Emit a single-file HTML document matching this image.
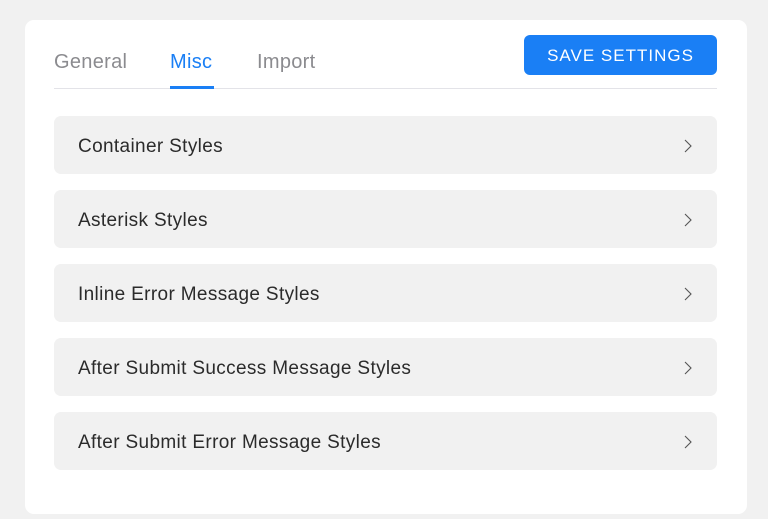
<!DOCTYPE html>
<html><head><style>
body{margin:0;background:#f1f1f1;width:768px;height:519px;font-family:"Liberation Sans",sans-serif;position:relative;overflow:hidden}
.card{position:absolute;left:25px;top:20px;width:722px;height:494px;background:#fff;border-radius:9px}
.tab{position:absolute;top:51px;font-size:20px;color:#8b8b8f;letter-spacing:0.3px}
.btn{position:absolute;left:524px;top:35px;width:193px;height:40px;background:#1a7ff5;border-radius:6px;color:#fff;font-size:17px;letter-spacing:1px;text-align:center;line-height:41px}
.line{position:absolute;left:54px;top:88px;width:663px;height:1px;background:#e3e3e8}
.ul{position:absolute;left:170px;top:86px;width:44px;height:3px;background:#1a7ff5}
.row{position:absolute;left:54px;width:663px;height:58px;background:#f1f1f1;border-radius:7px}
.row span{position:absolute;left:24px;top:20px;font-size:19px;letter-spacing:0.35px;color:#2b2b2b}
.row svg{position:absolute;left:628px;top:22px}
</style></head><body>
<div class="card"></div>
<div class="tab" style="left:54px">General</div>
<div class="tab" style="left:170px;color:#1a7ff5">Misc</div>
<div class="tab" style="left:257px">Import</div>
<div class="btn">SAVE SETTINGS</div>
<div class="line"></div><div class="ul"></div>
<div class="row" style="top:116px"><span>Container Styles</span><svg width="12" height="16"><path d="M3 2l6 6-6 6" fill="none" stroke="#555" stroke-width="1.1"/></svg></div>
<div class="row" style="top:190px"><span>Asterisk Styles</span><svg width="12" height="16"><path d="M3 2l6 6-6 6" fill="none" stroke="#555" stroke-width="1.1"/></svg></div>
<div class="row" style="top:264px"><span>Inline Error Message Styles</span><svg width="12" height="16"><path d="M3 2l6 6-6 6" fill="none" stroke="#555" stroke-width="1.1"/></svg></div>
<div class="row" style="top:338px"><span>After Submit Success Message Styles</span><svg width="12" height="16"><path d="M3 2l6 6-6 6" fill="none" stroke="#555" stroke-width="1.1"/></svg></div>
<div class="row" style="top:412px"><span>After Submit Error Message Styles</span><svg width="12" height="16"><path d="M3 2l6 6-6 6" fill="none" stroke="#555" stroke-width="1.1"/></svg></div>
</body></html>
